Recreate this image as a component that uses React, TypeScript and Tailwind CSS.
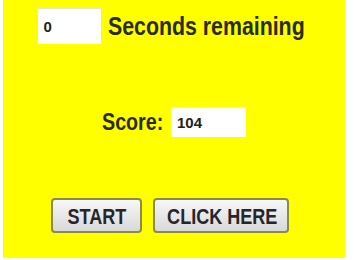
const font = "font-['Liberation_Sans',Arial,sans-serif]"

function Narrow({ children, width }: { children: string; width: number }) {
  return (
    <span className="inline-block whitespace-nowrap" style={{ width }}>
      <span className="inline-block origin-left scale-x-[0.82]">{children}</span>
    </span>
  )
}

export default function App() {
  return (
    <div className="w-[354px] h-[260px] bg-white">
      <div className={`ml-[3px] w-[342px] h-[258px] bg-[#ffff00] flex flex-col items-center ${font} text-[#2b2b1c]`}>
        <div className="mt-[8px] flex items-center gap-[7px] pr-[6px]">
          <input
            readOnly
            value="0"
            className="w-[64px] h-[36px] bg-white border-t border-l border-[#e6e6cc] px-[6px] text-[15px] font-bold text-[#222] outline-none"
          />
          <span className="text-[26px] font-bold leading-none">
            <Narrow width={198}>Seconds remaining</Narrow>
          </span>
        </div>
        <div className="mt-[63px] flex items-center gap-[7px]">
          <span className="text-[24px] font-bold leading-none">
            <Narrow width={62}>Score:</Narrow>
          </span>
          <input
            readOnly
            value="104"
            className="w-[75px] h-[30px] bg-white px-[6px] text-[15px] font-bold text-[#222] outline-none"
          />
        </div>
        <div className="mt-[61px] flex items-center gap-[11px] pr-[8px]">
          <button className="w-[91px] h-[35px] rounded-[4px] border-2 border-[#8c8a4a] bg-gradient-to-b from-[#f7f7f7] to-[#d9d9d9] text-[22px] font-bold text-[#26262a]">
            <span className="inline-block scale-x-[0.82]">START</span>
          </button>
          <button className="w-[136px] h-[35px] rounded-[4px] border-2 border-[#8c8a4a] bg-gradient-to-b from-[#f7f7f7] to-[#d9d9d9] text-[22px] font-bold text-[#26262a]">
            <span className="inline-block scale-x-[0.82] whitespace-nowrap">CLICK HERE</span>
          </button>
        </div>
      </div>
    </div>
  )
}
